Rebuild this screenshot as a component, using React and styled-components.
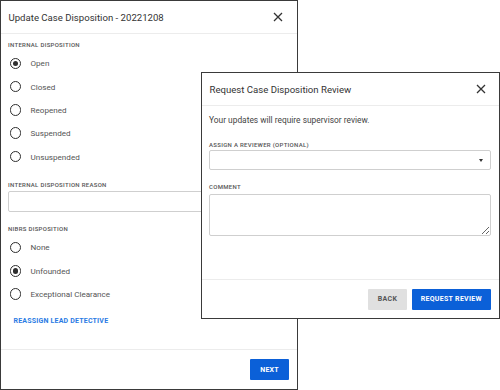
import React from 'react';
import styled, { createGlobalStyle } from 'styled-components';

const GlobalStyle = createGlobalStyle`
  html, body {
    margin: 0;
    padding: 0;
    background: #ffffff;
    font-family: Roboto, "Liberation Sans", Arial, sans-serif;
  }
  * { box-sizing: border-box; }
`;

const Desktop = styled.div`
  position: relative;
  width: 500px;
  height: 390px;
  overflow: hidden;
`;

const Dialog = styled.div`
  display: flex;
  flex-direction: column;
  width: ${p => p.$w}px;
  height: ${p => p.$h}px;
  background: #fff;
  border: 1px solid #3a3a3a;
`;

const FloatingDialog = styled(Dialog)`
  position: absolute;
  left: ${p => p.$x}px;
  top: ${p => p.$y}px;
`;

const Header = styled.div`
  display: flex;
  align-items: center;
  justify-content: space-between;
  height: 33px;
  padding: 0 ${p => p.$pr || 13}px 0 7.5px;
  border-bottom: 1px solid #ececec;
  flex-shrink: 0;
`;

const Title = styled.div`
  font-size: 9.6px;
  color: #333;
  padding-top: 1px;
`;

const CloseButton = styled.button`
  display: flex;
  align-items: center;
  justify-content: center;
  width: 12px;
  height: 12px;
  padding: 0;
  border: none;
  background: none;
  color: #333;
`;

const Body = styled.div`
  flex: 1;
  display: flex;
  flex-direction: column;
  padding: ${p => p.$pt}px 8px 0 7px;
`;

const SectionLabel = styled.div`
  height: 10px;
  line-height: 10px;
  font-size: 6px;
  font-weight: 500;
  letter-spacing: 0.3px;
  color: #555;
  text-transform: uppercase;
  margin-top: ${p => p.$mt || 0}px;
`;

const RadioGroup = styled.div`
  display: flex;
  flex-direction: column;
  margin-top: ${p => p.$mt || 0}px;
`;

const RadioRow = styled.label`
  display: flex;
  align-items: center;
  height: 23.3px;
  padding-left: 1.5px;
  font-size: 8.1px;
  color: #555;
`;

const RadioCircle = styled.span`
  width: 11.5px;
  height: 11.5px;
  border: 1.5px solid #2e2e2e;
  border-radius: 50%;
  display: flex;
  align-items: center;
  justify-content: center;
  margin-right: 9.5px;
  &::after {
    content: '';
    width: 5.5px;
    height: 5.5px;
    border-radius: 50%;
    background: #2e2e2e;
    display: ${p => (p.$checked ? 'block' : 'none')};
  }
`;

const TextInput = styled.div`
  height: ${p => p.$h}px;
  margin-top: ${p => p.$mt || 0}px;
  border: 1px solid #cfcfcf;
  border-radius: 2px;
  background: #fff;
`;

const SelectBox = styled.div`
  position: relative;
  height: 20px;
  margin-top: ${p => p.$mt || 0}px;
  border: 1px solid #cfcfcf;
  border-radius: 2px;
  &::after {
    content: '';
    position: absolute;
    right: 7px;
    top: 8px;
    border-left: 2.5px solid transparent;
    border-right: 2.5px solid transparent;
    border-top: 3px solid #333;
  }
`;

const TextArea = styled.textarea`
  display: block;
  width: 100%;
  height: 42px;
  margin-top: ${p => p.$mt || 0}px;
  border: 1px solid #cfcfcf;
  border-radius: 2px;
  resize: vertical;
  font: inherit;
  outline: none;
`;

const LinkButton = styled.div`
  margin-top: ${p => p.$mt || 0}px;
  padding-left: 5.5px;
  height: 10px;
  line-height: 10px;
  font-size: 7px;
  font-weight: 700;
  letter-spacing: 0.2px;
  color: #2a7be4;
`;

const Note = styled.div`
  font-size: 8.4px;
  line-height: 12px;
  color: #444;
`;

const Footer = styled.div`
  display: flex;
  align-items: center;
  justify-content: flex-end;
  gap: 5px;
  height: ${p => p.$h}px;
  padding: 0 8px;
  border-top: 1px solid #ececec;
  flex-shrink: 0;
`;

const Button = styled.button`
  height: 21px;
  padding: 0 ${p => p.$px || 9}px;
  border: none;
  border-radius: 1px;
  font-family: inherit;
  font-size: 7px;
  font-weight: 700;
  letter-spacing: 0.3px;
  background: ${p => (p.$variant === 'secondary' ? '#e0e0e0' : '#0b60d8')};
  color: ${p => (p.$variant === 'secondary' ? '#555' : '#fff')};
`;

const CloseIcon = () => (
  <svg width="10" height="10" viewBox="0 0 10 10">
    <path d="M1 1L9 9M9 1L1 9" stroke="currentColor" strokeWidth="1.3" fill="none" />
  </svg>
);

const internalOptions = ['Open', 'Closed', 'Reopened', 'Suspended', 'Unsuspended'];
const nibrsOptions = ['None', 'Unfounded', 'Exceptional Clearance'];

function Radios({ options, selected, mt }) {
  return (
    <RadioGroup $mt={mt}>
      {options.map(opt => (
        <RadioRow key={opt}>
          <RadioCircle $checked={opt === selected} />
          {opt}
        </RadioRow>
      ))}
    </RadioGroup>
  );
}

export default function App() {
  return (
    <Desktop>
      <GlobalStyle />
      <Dialog $w={298} $h={390}>
        <Header $pr={13}>
          <Title>Update Case Disposition - 20221208</Title>
          <CloseButton><CloseIcon /></CloseButton>
        </Header>
        <Body $pt={5.5}>
          <SectionLabel>Internal Disposition</SectionLabel>
          <Radios options={internalOptions} selected="Open" mt={2.2} />
          <SectionLabel $mt={11.7}>Internal Disposition Reason</SectionLabel>
          <TextInput $h={21} $mt={1} />
          <SectionLabel $mt={12.3}>NIBRS Disposition</SectionLabel>
          <Radios options={nibrsOptions} selected="Unfounded" mt={1.7} />
          <LinkButton $mt={10.3}>REASSIGN LEAD DETECTIVE</LinkButton>
        </Body>
        <Footer $h={40}>
          <Button $px={10}>NEXT</Button>
        </Footer>
      </Dialog>

      <FloatingDialog $x={201} $y={72} $w={299} $h={247}>
        <Header $pr={12}>
          <Title>Request Case Disposition Review</Title>
          <CloseButton><CloseIcon /></CloseButton>
        </Header>
        <Body $pt={8}>
          <Note>Your updates will require supervisor review.</Note>
          <SectionLabel $mt={14}>Assign a Reviewer (Optional)</SectionLabel>
          <SelectBox $mt={-0.5} />
          <SectionLabel $mt={12.5}>Comment</SectionLabel>
          <TextArea $mt={1.5} />
        </Body>
        <Footer $h={39}>
          <Button $variant="secondary" $px={9.5}>BACK</Button>
          <Button $px={9}>REQUEST REVIEW</Button>
        </Footer>
      </FloatingDialog>
    </Desktop>
  );
}
